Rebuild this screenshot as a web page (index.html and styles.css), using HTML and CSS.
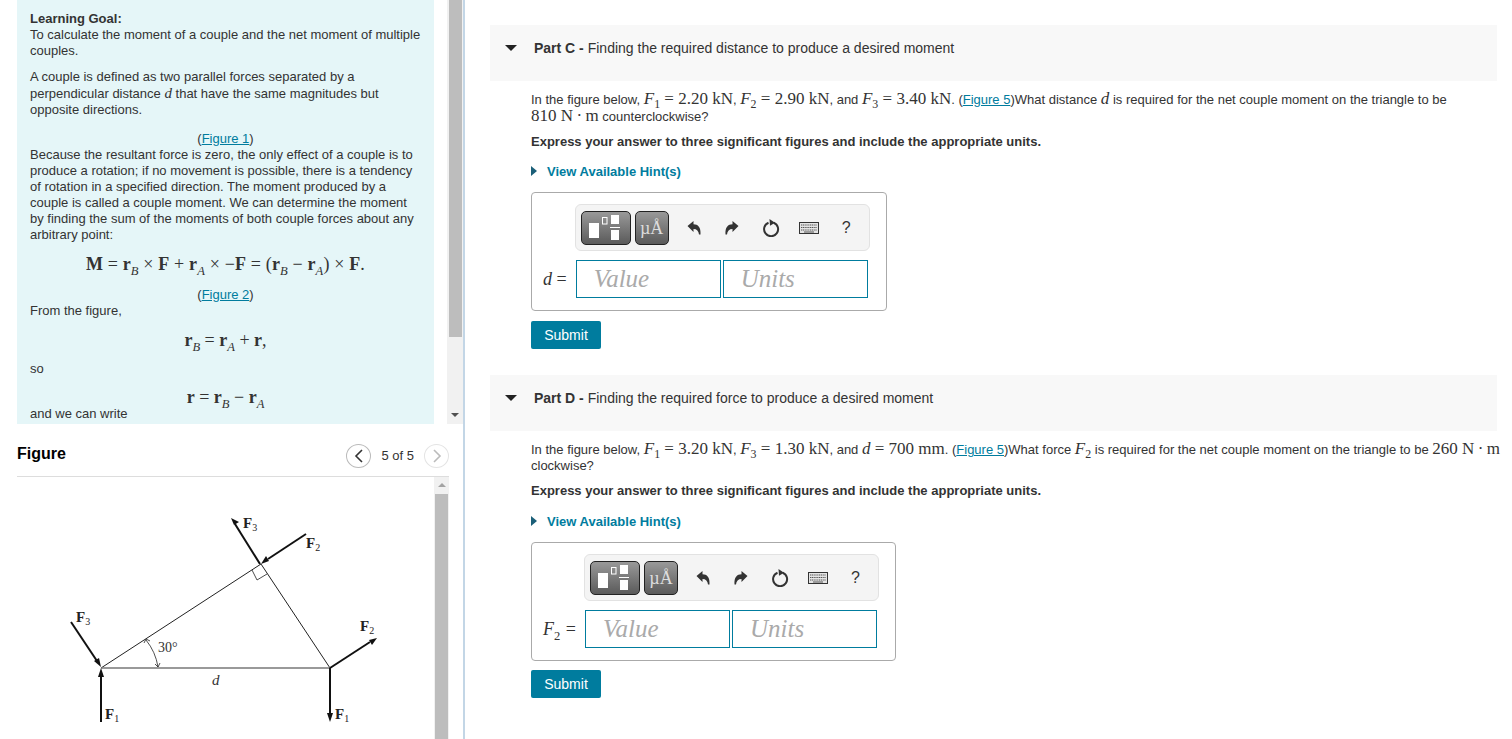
FILE: index.html
```html
<!DOCTYPE html>
<html lang="en">

<head>
    <meta charset="UTF-8">
    <meta name="viewport" content="width=device-width, initial-scale=1.0">
    <title>Moments of Couples</title>
    <link rel="stylesheet" href="styles.css">
</head>

<body>
    <svg class="icon-defs" aria-hidden="true">
        <symbol id="icon-undo" viewBox="0 0 16 16">
            <path d="M1.500 6 7.500 1v3.200c4.500 0 7.500 3 7 10.300h-1.500c-.3-3.500-2.200-5.500-5.500-5.500v3z" />
        </symbol>
        <symbol id="icon-redo" viewBox="0 0 16 16">
            <path d="M14.500 6 8.500 1v3.200c-4.500 0-7.500 3-7 10.300H3c.3-3.500 2.200-5.500 5.500-5.500v3z" />
        </symbol>
        <symbol id="icon-reset" viewBox="0 0 18 18">
            <path d="M6.500 3.700a7 7 0 1 0 5.200 0" fill="none" stroke="currentColor" stroke-width="2" />
            <path d="M7.500 0 13 3.700 8 6.800z" />
        </symbol>
        <symbol id="icon-keyboard" viewBox="0 0 20 12">
            <rect x=".5" y=".5" width="19" height="11" fill="#e4e4e4" stroke="#333" />
            <path d="M2 3h16M2 5.500h16M2 8h16" stroke="#555" stroke-width="1.200" stroke-dasharray="1.200 .6" />
            <path d="M5 10h10" stroke="#555" />
        </symbol>
        <symbol id="icon-templates" viewBox="0 0 42 28">
            <path d="M4 9h10v15H4zM26 1h8v9h-8zM26 16h8v10h-8z" fill="#fff" />
            <path d="M25 13.500h10" stroke="#fff" />
            <rect x="17.500" y="3.500" width="4.500" height="6.500" fill="none" stroke="#fff" />
        </symbol>
    </svg>

    <div class="page">
        <div class="left-col">
            <div class="intro-row">
                <div class="intro">
                    <p class="goal"><b>Learning Goal:</b><br>To calculate the moment of a couple and the net moment of multiple couples.</p>
                    <p class="para-a">A couple is defined as two parallel forces separated by a perpendicular distance <i class="math">d</i> that have the same magnitudes but opposite directions.</p>
                    <p class="fig-ref para-b">(<a href="#">Figure 1</a>)</p>
                    <p>Because the resultant force is zero, the only effect of a couple is to produce a rotation; if no movement is possible, there is a tendency of rotation in a specified direction. The moment produced by a couple is called a couple moment. We can determine the moment by finding the sum of the moments of both couple forces about any arbitrary point:</p>
                    <p class="equation eq-a"><b>M</b> = <b>r</b><sub>B</sub> &times; <b>F</b> + <b>r</b><sub>A</sub> &times; &minus;<b>F</b> = (<b>r</b><sub>B</sub> &minus; <b>r</b><sub>A</sub>) &times; <b>F</b>.</p>
                    <p class="fig-ref">(<a href="#">Figure 2</a>)</p>
                    <p>From the figure,</p>
                    <p class="equation eq-b"><b>r</b><sub>B</sub> = <b>r</b><sub>A</sub> + <b>r</b>,</p>
                    <p class="para-c">so</p>
                    <p class="equation eq-c"><b>r</b> = <b>r</b><sub>B</sub> &minus; <b>r</b><sub>A</sub></p>
                    <p class="para-d">and we can write</p>
                </div>
                <div class="scrollbar intro-scroll">
                    <div class="thumb"></div>
                    <div class="arrow-down"></div>
                </div>
            </div>

            <div class="figure-head">
                <h2>Figure</h2>
                <div class="pager">
                    <span class="pager-btn"><svg width="10" height="14" viewBox="0 0 10 14"><path d="M8 1 2 7l6 6" fill="none" stroke="#333" stroke-width="1.600" /></svg></span>
                    <span class="pager-count">5 of 5</span>
                    <span class="pager-btn off"><svg width="10" height="14" viewBox="0 0 10 14"><path d="m2 1 6 6-6 6" fill="none" stroke="#bbb" stroke-width="1.600" /></svg></span>
                </div>
            </div>

            <div class="figure-row">
                <svg class="diagram" width="417" height="262" viewBox="17 477 417 262">
                    <g fill="none" stroke="#222">
                        <path d="M101 668 261 564 330 668" />
                        <path d="M101 668H330" stroke="#777" stroke-width="1.600" />
                        <path d="m252 570 5 10 10-6" stroke-width=".8" />
                        <path d="M146 640A57 57 0 0 1 158 667" stroke-width=".8" />
                        <path d="m144 643 2-4 4 2M155 664l3 3 2-4" stroke-width=".8" />
                    </g>
                    <g stroke="#111" stroke-width="2">
                        <path d="M260 564 235 524" />
                        <path d="M306 534 268 559" />
                        <path d="M71 622 97 661" />
                        <path d="M101 722V676" />
                        <path d="M330 668V714" />
                        <path d="M330 668 370 642" />
                    </g>
                    <g fill="#111">
                        <path d="m231 518 8 4-5 3z" />
                        <path d="m261 564 5-8 3 5z" />
                        <path d="m101 667-7-6 5-3z" />
                        <path d="m101 668 3 9h-6z" />
                        <path d="m330 722-3-9h6z" />
                        <path d="m377 638-5 7-3-5z" />
                    </g>
                    <g class="fig-label">
                        <text x="243" y="528">F<tspan class="fig-sub" dy="3">3</tspan></text>
                        <text x="306" y="548">F<tspan class="fig-sub" dy="3">2</tspan></text>
                        <text x="76" y="622">F<tspan class="fig-sub" dy="3">3</tspan></text>
                        <text x="360" y="631">F<tspan class="fig-sub" dy="3">2</tspan></text>
                        <text x="105" y="719">F<tspan class="fig-sub" dy="3">1</tspan></text>
                        <text x="335" y="719">F<tspan class="fig-sub" dy="3">1</tspan></text>
                    </g>
                    <text class="fig-plain" x="158" y="652">30°</text>
                    <text class="fig-plain fig-italic" x="212" y="685">d</text>
                </svg>
                <div class="scrollbar figure-scroll">
                    <div class="arrow-up"></div>
                    <div class="thumb"></div>
                </div>
            </div>
        </div>

        <div class="right-col">
            <section class="part">
                <div class="part-head">
                    <span class="caret"></span>
                    <span><b>Part C -</b> Finding the required distance to produce a desired moment</span>
                </div>
                <div class="part-body">
                    <p class="question">In the figure below, <span class="math"><i>F</i><sub>1</sub> = 2.20 kN</span>, <span class="math"><i>F</i><sub>2</sub> = 2.90 kN</span>, and <span class="math"><i>F</i><sub>3</sub> = 3.40 kN</span>. (<a href="#">Figure 5</a>)What distance <i class="math">d</i> is required for the net couple moment on the triangle to be <span class="math">810 N&thinsp;&middot;&thinsp;m</span> counterclockwise?</p>
                    <p class="instruction">Express your answer to three significant figures and include the appropriate units.</p>
                    <p class="hint"><span class="hint-caret"></span>View Available Hint(s)</p>
                    <div class="answer-box">
                        <div class="answer-label math"><i>d</i> =</div>
                        <div class="answer-main">
                            <div class="toolbar">
                                <span class="tool-btn tool-templates"><svg width="42" height="28"><use href="#icon-templates" /></svg></span>
                                <span class="tool-btn tool-units">&micro;&Aring;</span>
                                <span class="tool-icons">
                                    <svg class="tool-icon"><use href="#icon-undo" /></svg>
                                    <svg class="tool-icon"><use href="#icon-redo" /></svg>
                                    <svg class="tool-icon reset"><use href="#icon-reset" /></svg>
                                    <svg class="tool-icon kbd"><use href="#icon-keyboard" /></svg>
                                    <span class="tool-help">?</span>
                                </span>
                            </div>
                            <div class="inputs">
                                <div class="input">Value</div>
                                <div class="input">Units</div>
                            </div>
                        </div>
                    </div>
                    <button class="submit">Submit</button>
                </div>
            </section>

            <section class="part part-d">
                <div class="part-head">
                    <span class="caret"></span>
                    <span><b>Part D -</b> Finding the required force to produce a desired moment</span>
                </div>
                <div class="part-body">
                    <p class="question">In the figure below, <span class="math"><i>F</i><sub>1</sub> = 3.20 kN</span>, <span class="math"><i>F</i><sub>3</sub> = 1.30 kN</span>, and <span class="math"><i>d</i> = 700 mm</span>. (<a href="#">Figure 5</a>)What force <span class="math"><i>F</i><sub>2</sub></span> is required for the net couple moment on the triangle to be <span class="math">260 N&thinsp;&middot;&thinsp;m</span> clockwise?</p>
                    <p class="instruction">Express your answer to three significant figures and include the appropriate units.</p>
                    <p class="hint"><span class="hint-caret"></span>View Available Hint(s)</p>
                    <div class="answer-box">
                        <div class="answer-label math"><i>F</i><sub>2</sub> =</div>
                        <div class="answer-main">
                            <div class="toolbar">
                                <span class="tool-btn tool-templates"><svg width="42" height="28"><use href="#icon-templates" /></svg></span>
                                <span class="tool-btn tool-units">&micro;&Aring;</span>
                                <span class="tool-icons">
                                    <svg class="tool-icon"><use href="#icon-undo" /></svg>
                                    <svg class="tool-icon"><use href="#icon-redo" /></svg>
                                    <svg class="tool-icon reset"><use href="#icon-reset" /></svg>
                                    <svg class="tool-icon kbd"><use href="#icon-keyboard" /></svg>
                                    <span class="tool-help">?</span>
                                </span>
                            </div>
                            <div class="inputs">
                                <div class="input">Value</div>
                                <div class="input">Units</div>
                            </div>
                        </div>
                    </div>
                    <button class="submit">Submit</button>
                </div>
            </section>
        </div>
    </div>
</body>
</html>
```

FILE: styles.css
```css
body {
    font-family: 'Liberation Sans', Arial, sans-serif;
    font-size: 13px;
    line-height: 16px;
    color: #333;
    background-color: #fff;
    margin: 0;
    padding: 0;
    overflow: hidden;
}

p {
    margin: 0;
}

a {
    color: #007c9e;
}

.icon-defs {
    display: none;
}

.page {
    display: flex;
    height: 739px;
    overflow: hidden;
}

/* Left column */
.left-col {
    width: 465px;
    flex: none;
    padding-left: 17px;
    box-sizing: border-box;
    border-right: 2px solid #c3d6e6;
}

.intro-row {
    display: flex;
    height: 424px;
}

.intro {
    width: 417px;
    flex: none;
    box-sizing: border-box;
    padding: 11px 13px 0;
    background-color: #e5f6f8;
    overflow: hidden;
}

.intro .math {
    font-size: 15px;
}

.para-a {
    margin-top: 10px;
}

.para-b {
    margin-top: 13px;
}

.para-c {
    margin-top: 11px;
}

.para-d {
    margin-top: -1px;
}

.fig-ref {
    text-align: center;
}

.equation {
    font-family: 'Liberation Serif', serif;
    font-size: 18px;
    line-height: 20px;
    text-align: center;
}

.eq-a {
    margin: 11px 0 13px;
    white-space: nowrap;
    letter-spacing: .15px;
}

.eq-b {
    margin: 11px 0 0;
}

.eq-c {
    margin: 10px 0 0;
}

.equation sub,
.math sub {
    font-size: 70%;
    line-height: 0;
}

.equation sub {
    font-style: italic;
}

.math {
    font-family: 'Liberation Serif', serif;
    font-size: 17px;
    white-space: nowrap;
}

.scrollbar {
    background-color: #f1f1f1;
    position: relative;
}

.thumb {
    background-color: #bdbdbd;
}

.intro-scroll {
    width: 16px;
    margin-left: 13px;
    flex: none;
}

.intro-scroll .thumb {
    height: 337px;
    margin: 0 1px 0 2px;
}

.arrow-down {
    position: absolute;
    left: 4px;
    bottom: 7px;
    border-left: 4px solid transparent;
    border-right: 4px solid transparent;
    border-top: 4px solid #505050;
}

.arrow-up {
    border-left: 4px solid transparent;
    border-right: 4px solid transparent;
    border-bottom: 4px solid #a3a3a3;
    width: 0;
    margin: 6px auto 7px;
}

.figure-head {
    display: flex;
    justify-content: space-between;
    align-items: center;
    width: 432px;
    height: 53px;
    box-sizing: border-box;
    padding-top: 6px;
    border-bottom: 1px solid #ddd;
}

.figure-head h2 {
    margin: 2px 0 0;
    font-size: 16px;
    font-weight: 700;
    color: #000;
}

.pager {
    display: flex;
    align-items: center;
    margin-top: 6px;
}

.pager-btn {
    width: 23px;
    height: 22px;
    border: 1px solid #bbb;
    border-radius: 50%;
    display: flex;
    align-items: center;
    justify-content: center;
}

.pager-btn.off {
    border-color: #e4e4e4;
}

.pager-count {
    margin: 0 10px;
}

.figure-row {
    display: flex;
    width: 432px;
    height: 262px;
}

.diagram {
    flex: none;
}

.fig-label {
    font-family: 'Liberation Serif', serif;
    font-size: 15px;
    font-weight: 700;
    fill: #222;
}

.fig-sub {
    font-size: 10px;
    font-weight: 400;
}

.fig-plain {
    font-family: 'Liberation Serif', serif;
    font-size: 14px;
    fill: #333;
}

.fig-italic {
    font-style: italic;
    font-size: 15px;
}

.figure-scroll {
    width: 15px;
    flex: none;
}

.figure-scroll .thumb {
    height: 245px;
    margin: 0 1px;
}

/* Right column */
.right-col {
    flex: 1;
    min-width: 0;
    padding: 25px 15px 0 25px;
}

.part-d {
    margin-top: 26px;
}

.part-head {
    height: 56px;
    box-sizing: border-box;
    background-color: #f8f8f8;
    display: flex;
    align-items: flex-start;
    padding: 15px 0 0 15px;
    font-size: 14px;
}

.caret {
    width: 0;
    margin: 5px 17px 0 0;
    border-left: 6px solid transparent;
    border-right: 6px solid transparent;
    border-top: 6px solid #222;
}

.part-body {
    padding: 10px 0 0 41px;
    margin-right: -5px;
}

.question {
    margin: 0;
}

.instruction {
    margin-top: 9px;
    font-weight: 700;
}

.hint {
    margin-top: 14px;
    font-weight: 700;
    color: #007c9e;
}

.part-d .hint {
    margin-top: 15px;
}

.hint-caret {
    display: inline-block;
    width: 0;
    margin-right: 10px;
    border-top: 5px solid transparent;
    border-bottom: 5px solid transparent;
    border-left: 6px solid #1b5f78;
}

.answer-box {
    display: inline-flex;
    align-items: flex-end;
    margin-top: 12px;
    padding: 11px 18px 12px 11px;
    border: 1px solid #aaa;
    border-radius: 4px;
    vertical-align: top;
}

.answer-label {
    height: 38px;
    line-height: 38px;
    padding-right: 9px;
    font-size: 18px;
}

.answer-label sub {
    margin-right: 1px;
}

.answer-main {
    width: 292px;
}

.toolbar {
    display: flex;
    align-items: center;
    width: 295px;
    height: 47px;
    box-sizing: border-box;
    margin-left: -1px;
    padding-left: 5px;
    background-color: #f4f4f4;
    border: 1px solid #e2e2e2;
    border-radius: 6px;
}

.tool-btn {
    display: flex;
    align-items: center;
    justify-content: center;
    height: 34px;
    box-sizing: border-box;
    border: 1px solid #222;
    border-radius: 5px;
    background: linear-gradient(#999, #5a5a5a);
    color: #ddd;
}

.tool-templates {
    width: 50px;
}

.tool-units {
    width: 34px;
    margin-left: 4px;
    font-family: 'Liberation Serif', serif;
    font-size: 18px;
}

.tool-icons {
    display: flex;
    align-items: center;
    color: #333;
    margin-left: 17px;
}

.tool-icon {
    width: 16px;
    height: 16px;
    fill: currentColor;
    margin-right: 22px;
}

.tool-icon.reset {
    width: 18px;
    height: 18px;
    margin-right: 19px;
}

.tool-icon.kbd {
    width: 20px;
    height: 12px;
    margin-right: 23px;
}

.tool-help {
    font-size: 16px;
}

.inputs {
    display: flex;
    gap: 2px;
    margin-top: 9px;
}

.input {
    width: 145px;
    height: 38px;
    box-sizing: border-box;
    padding-left: 17px;
    border: 1px solid #007c9e;
    font-family: 'Liberation Serif', serif;
    font-style: italic;
    font-size: 25px;
    line-height: 35px;
    color: #aaa;
}

.submit {
    display: block;
    width: 70px;
    height: 28px;
    margin-top: 10px;
    padding: 0;
    border: none;
    border-radius: 2px;
    background-color: #007c9e;
    color: #fff;
    font-family: inherit;
    font-size: 14px;
}

.part-d .submit {
    margin-top: 9px;
}
```
